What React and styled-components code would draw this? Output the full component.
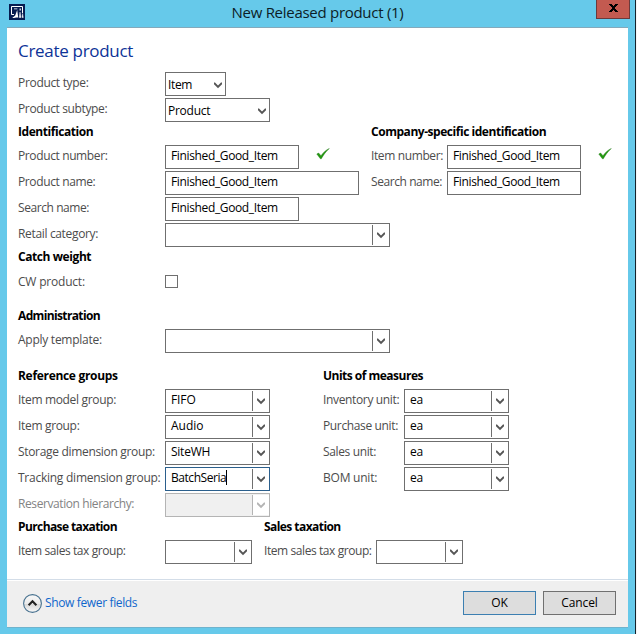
import React from 'react';
import styled, { createGlobalStyle } from 'styled-components';

const GlobalStyle = createGlobalStyle`
  * { box-sizing: border-box; }
  body { margin: 0; background: #f4f6f7; overflow: hidden; }
`;

const Window = styled.div`
  display: flex;
  flex-direction: column;
  width: 636px;
  height: 634px;
  padding: 0 7px 6px;
  background: #66c9ea;
  border-right: 1px solid #15222b;
  font: 12px/16px 'Open Sans', 'Noto Sans', sans-serif;
  color: #000;
`;

const TitleBar = styled.header`
  display: flex;
  align-items: flex-start;
  justify-content: space-between;
  height: 28px;
  border-bottom: 1px solid #84a9bb;
`;

const AppIcon = styled.svg`
  width: 16px;
  height: 16px;
  margin: 4px 0 0 2px;
`;

const Title = styled.h1`
  margin: 1px 0 0 14px;
  font-size: 15px;
  line-height: 22px;
  font-weight: 400;
  letter-spacing: -0.28px;
  color: #0c1d27;
`;

const CloseButton = styled.button`
  display: flex;
  width: 34px;
  height: 19px;
  margin-right: -2px;
  padding: 4px 0 0 12px;
  border: 1px solid #6b3a3c;
  border-top: 0;
  background: #c35a50;
`;

const Body = styled.main`
  flex: 1;
  padding: 12px 0 0 11px;
  background: #fff;
`;

const PageTitle = styled.h2`
  height: 32px;
  margin: 0;
  font-size: 17px;
  line-height: 22px;
  font-weight: 400;
  letter-spacing: -0.3px;
  color: #0d3397;
`;

const Columns = styled.div`
  display: grid;
  grid-template-columns: ${p => p.$split}px 1fr;
`;

const Heading = styled.h3`
  display: flex;
  align-items: flex-end;
  height: ${p => p.$height}px;
  margin: 0;
  padding-bottom: ${p => p.$gap || 5}px;
  font-size: 12px;
  font-weight: 700;
  white-space: nowrap;
  letter-spacing: ${p => p.$track}px;
`;

const Row = styled.div`
  display: grid;
  grid-template-columns: ${p => p.$label || 147}px auto auto;
  justify-content: start;
  align-items: start;
  height: 26px;
`;

const Label = styled.label`
  padding-top: 3px;
  white-space: nowrap;
  letter-spacing: ${p => p.$track}px;
  color: ${p => (p.$disabled ? '#838383' : '#4c4c4c')};
`;

const borderColors = { normal: '#6f6f6f', focus: '#2b5f8c', disabled: '#b4b4b4' };

const Box = styled.div`
  display: flex;
  width: ${p => p.$width}px;
  height: 24px;
  border: 1px solid ${p => borderColors[p.$state || 'normal']};
  background: ${p => (p.$state === 'disabled' ? '#f0f0f0' : '#fff')};
`;

const Value = styled.span`
  flex: 1;
  height: 16px;
  padding-left: ${p => (p.$select ? 2 : 5)}px;
  margin-top: ${p => (p.$select ? 4 : 2)}px;
  white-space: nowrap;
  letter-spacing: ${p => p.$track || 0}px;
`;

const Caret = styled.i`
  display: inline-block;
  width: 1px;
  height: 15px;
  vertical-align: top;
  background: #000;
`;

const DropButton = styled.span`
  display: flex;
  align-items: flex-start;
  width: 17px;
  margin: 1px 0;
  padding: 7px 0 0 4px;
  border-left: 1px solid ${p => (p.$disabled ? '#b4b4b4' : '#6f6f6f')};
  background: #fff;
`;

const SelectArrow = styled.span`
  display: flex;
  align-items: flex-start;
  padding: 9px 3px 0 0;
`;

const Checkbox = styled.span`
  width: 13px;
  height: 13px;
  margin-top: 4px;
  border: 1px solid #6f6f6f;
`;

const CheckIcon = styled.svg`
  width: 14px;
  height: 12px;
  margin: 3px 0 0 17px;
`;

const Footer = styled.footer`
  display: flex;
  align-items: flex-start;
  height: 49px;
  padding: 10px 12px 0 16px;
  border-top: 1px solid #d3dde8;
  border-bottom: 1px solid #6fb3cd;
  background: linear-gradient(#fff 1px, #efefef 1px);
`;

const FewerLink = styled.a`
  display: flex;
  flex: 1;
  align-items: center;
  gap: 3px;
  height: 26px;
  letter-spacing: -0.36px;
  color: #0f66cc;
`;

const Button = styled.button`
  width: 73px;
  height: 24px;
  margin: 1px 0 0 ${p => (p.$primary ? 0 : 7)}px;
  padding: 0 0 1px;
  border: 1px solid ${p => (p.$primary ? '#3c7fb1' : '#707070')};
  background: #dddddd;
  font: inherit;
  letter-spacing: ${p => p.$track}px;
`;

const Chevron = ({ color = '#555' }) => (
  <svg width="8" height="7" viewBox="0 0 8 7">
    <path d="M0 0.4H1L4 3.5L7 0.4H8V2.3L4 6.2L0 2.3Z" fill={color} />
  </svg>
);

const Check = () => (
  <CheckIcon viewBox="0 0 14 12">
    <path d="M0.8 6L2.6 5L5 7.7C7 4.8 9.5 2.2 13.4 0.4C10 3.3 7.6 6.8 5.3 10.8L4.4 10.8Z" fill="#239a10" stroke="#176f0a" strokeWidth="0.4" />
  </CheckIcon>
);

const Combo = ({ width, value, track, state, caret }) => (
  <Box $width={width} $state={state}>
    <Value $track={track}>{value}{caret && <Caret />}</Value>
    <DropButton $disabled={state === 'disabled'}>
      <Chevron color={state === 'disabled' ? '#b4b4b4' : undefined} />
    </DropButton>
  </Box>
);

const Select = ({ width, value, track }) => (
  <Box $width={width}>
    <Value $select $track={track}>{value}</Value>
    <SelectArrow><Chevron /></SelectArrow>
  </Box>
);

const Field = ({ label, track, labelWidth, disabled, children }) => (
  <Row $label={labelWidth}>
    <Label $track={track} $disabled={disabled}>{label}</Label>
    {children}
  </Row>
);

const TextBox = ({ width = 134 }) => (
  <Box $width={width}><Value $track={-0.36}>Finished_Good_Item</Value></Box>
);

const units = [
  ['Inventory unit:', -0.35],
  ['Purchase unit:', -0.36],
  ['Sales unit:', -0.36],
  ['BOM unit:', -0.23],
];

export default function App() {
  return (
    <>
      <GlobalStyle />
      <Window>
        <TitleBar>
          <AppIcon viewBox="0 0 16 16">
            <rect width="16" height="16" fill="#061c50" />
            <path d="M5 10.5H2.5V2.5H13.5V9" fill="none" stroke="#fff" />
            <path d="M3.2 14L6.2 11.5L8.2 6L9.2 13.5H7.2L5 14Z" fill="#fff" />
            <path d="M10.2 13.5L11 8L12 13.5ZM13 13.5L13.6 9.5L14.3 13.5Z" fill="#fff" stroke="#fff" strokeWidth="0.4" />
            <path d="M10.6 4.6H11.8V6.4H10.6ZM5 4.5H8.4V5.3H5Z" fill="#fff" />
          </AppIcon>
          <Title>New Released product (1)</Title>
          <CloseButton aria-label="Close">
            <svg width="9" height="8" viewBox="0 0 9 8" shapeRendering="crispEdges">
              <path d="M0 0H3V1H4V2H5V1H6V0H9V1H8V2H7V3H6V5H7V6H8V7H9V8H6V7H5V6H4V7H3V8H0V7H1V6H2V5H3V3H2V2H1V1H0Z" fill="#000" />
            </svg>
          </CloseButton>
        </TitleBar>

        <Body>
          <PageTitle>Create product</PageTitle>
          <Field label="Product type:" track={-0.32}><Select width={61} value="Item" track={-0.35} /></Field>
          <Field label="Product subtype:" track={-0.37}><Select width={105} value="Product" track={-0.25} /></Field>

          <Columns $split={353}>
            <section>
              <Heading $height={21} $track={-0.44}>Identification</Heading>
              <Field label="Product number:" track={-0.38}><TextBox /><Check /></Field>
              <Field label="Product name:" track={-0.38}><TextBox width={194} /></Field>
              <Field label="Search name:" track={-0.42}><TextBox /></Field>
              <Field label="Retail category:" track={-0.34}><Combo width={225} /></Field>
            </section>
            <section>
              <Heading $height={21} $track={-0.46}>Company-specific identification</Heading>
              <Field labelWidth={76} label="Item number:" track={-0.38}><TextBox /><Check /></Field>
              <Field labelWidth={76} label="Search name:" track={-0.42}><TextBox /></Field>
            </section>
          </Columns>

          <Heading $height={22} $gap={6} $track={-0.42}>Catch weight</Heading>
          <Field label="CW product:" track={-0.2}><Checkbox /></Field>

          <Heading $height={32} $track={-0.64}>Administration</Heading>
          <Field label="Apply template:" track={-0.26}><Combo width={225} /></Field>

          <Columns $split={305}>
            <section>
              <Heading $height={34} $track={-0.31}>Reference groups</Heading>
              <Field label="Item model group:" track={-0.33}><Combo width={105} value="FIFO" track={-0.1} /></Field>
              <Field label="Item group:" track={-0.33}><Combo width={105} value="Audio" /></Field>
              <Field label="Storage dimension group:" track={-0.32}><Combo width={105} value="SiteWH" track={-0.25} /></Field>
              <Field label="Tracking dimension group:" track={-0.25}><Combo width={105} value="BatchSeria" track={-0.45} state="focus" caret /></Field>
              <Field label="Reservation hierarchy:" track={-0.41} disabled><Combo width={105} state="disabled" /></Field>
            </section>
            <section>
              <Heading $height={34} $track={-0.51}>Units of measures</Heading>
              {units.map(([label, track]) => (
                <Field key={label} labelWidth={81} label={label} track={track}>
                  <Combo width={105} value="ea" track={-0.3} />
                </Field>
              ))}
            </section>
          </Columns>

          <Columns $split={246}>
            <section>
              <Heading $height={21} $track={-0.6}>Purchase taxation</Heading>
              <Field label="Item sales tax group:" track={-0.42}><Combo width={87} /></Field>
            </section>
            <section>
              <Heading $height={21} $track={-0.56}>Sales taxation</Heading>
              <Field labelWidth={112} label="Item sales tax group:" track={-0.42}><Combo width={87} /></Field>
            </section>
          </Columns>
        </Body>

        <Footer>
          <FewerLink>
            <svg width="19" height="19" viewBox="0 0 19 19">
              <defs>
                <linearGradient id="knob" x1="0" y1="0" x2="0" y2="1">
                  <stop offset="0" stopColor="#f8f8f8" />
                  <stop offset="0.5" stopColor="#ebebeb" />
                  <stop offset="0.55" stopColor="#d9d9d9" />
                  <stop offset="1" stopColor="#fafafa" />
                </linearGradient>
              </defs>
              <circle cx="9.5" cy="9.5" r="8.9" fill="url(#knob)" stroke="#47718f" strokeWidth="1.1" />
              <path d="M5.6 11.2L9.5 7.3L13.4 11.2" fill="none" stroke="#222" strokeWidth="2.1" />
            </svg>
            Show fewer fields
          </FewerLink>
          <Button $primary $track={-0.1}>OK</Button>
          <Button $track={-0.1}>Cancel</Button>
        </Footer>
      </Window>
    </>
  );
}
